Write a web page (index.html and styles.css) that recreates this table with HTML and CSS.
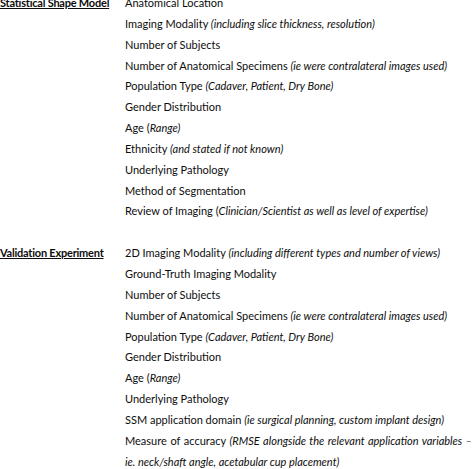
FILE: index.html
```html
<!DOCTYPE html>
<html lang="en">
<head>
<meta charset="utf-8">
<title>SSM reporting checklist</title>
<link rel="stylesheet" href="styles.css">
</head>
<body>
<div class="doc">
  <section class="group">
    <div class="label">Statistical Shape Model</div>
    <ul class="items">
      <li>Anatomical Location</li>
      <li>Imaging Modality <em>(including slice thickness, resolution)</em></li>
      <li>Number of Subjects</li>
      <li>Number of Anatomical Specimens <em>(ie were contralateral images used)</em></li>
      <li>Population Type <em>(Cadaver, Patient, Dry Bone)</em></li>
      <li>Gender Distribution</li>
      <li>Age (<em>Range)</em></li>
      <li>Ethnicity <em>(and stated if not known)</em></li>
      <li>Underlying Pathology</li>
      <li>Method of Segmentation</li>
      <li>Review of Imaging (<em>Clinician/Scientist as well as level of expertise)</em></li>
    </ul>
  </section>
  <section class="group">
    <div class="label">Validation Experiment</div>
    <ul class="items">
      <li>2D Imaging Modality <em>(including different types and number of views)</em></li>
      <li>Ground-Truth Imaging Modality</li>
      <li>Number of Subjects</li>
      <li>Number of Anatomical Specimens <em>(ie were contralateral images used)</em></li>
      <li>Population Type <em>(Cadaver, Patient, Dry Bone)</em></li>
      <li>Gender Distribution</li>
      <li>Age (<em>Range)</em></li>
      <li>Underlying Pathology</li>
      <li>SSM application domain <em>(ie surgical planning, custom implant design)</em></li>
      <li class="wrap"><span class="just">Measure of accuracy <em>(RMSE alongside the relevant application variables –</em></span><span class="cont"><em>ie. neck/shaft angle, acetabular cup placement)</em></span></li>
    </ul>
  </section>
</div>
</body>
</html>
```
FILE: styles.css
```css
html, body {
  margin: 0;
  padding: 0;
  background: #ffffff;
}
body {
  width: 474px;
  height: 469px;
  overflow: hidden;
  font-family: Lato, "Open Sans", "Liberation Sans", sans-serif;
  font-size: 11px;
  line-height: 20.85px;
  color: #0d0d0d;
}
.doc {
  margin-top: -7px;
  margin-left: 0;
}
.group {
  display: grid;
  grid-template-columns: 125px 347px;
  align-items: start;
}
.group + .group {
  margin-top: 20.85px;
}
.label {
  font-weight: 700;
  text-decoration: underline;
  text-underline-offset: 1px;
  letter-spacing: -0.22px;
  white-space: nowrap;
}
.items {
  list-style: none;
  margin: 0;
  padding: 0;
}
.items li {
  white-space: nowrap;
}
.items em {
  font-style: italic;
}
.items li.wrap {
  white-space: normal;
}
.just {
  display: block;
  text-align: justify;
  text-align-last: justify;
  white-space: nowrap;
}
.cont {
  display: block;
}
```
